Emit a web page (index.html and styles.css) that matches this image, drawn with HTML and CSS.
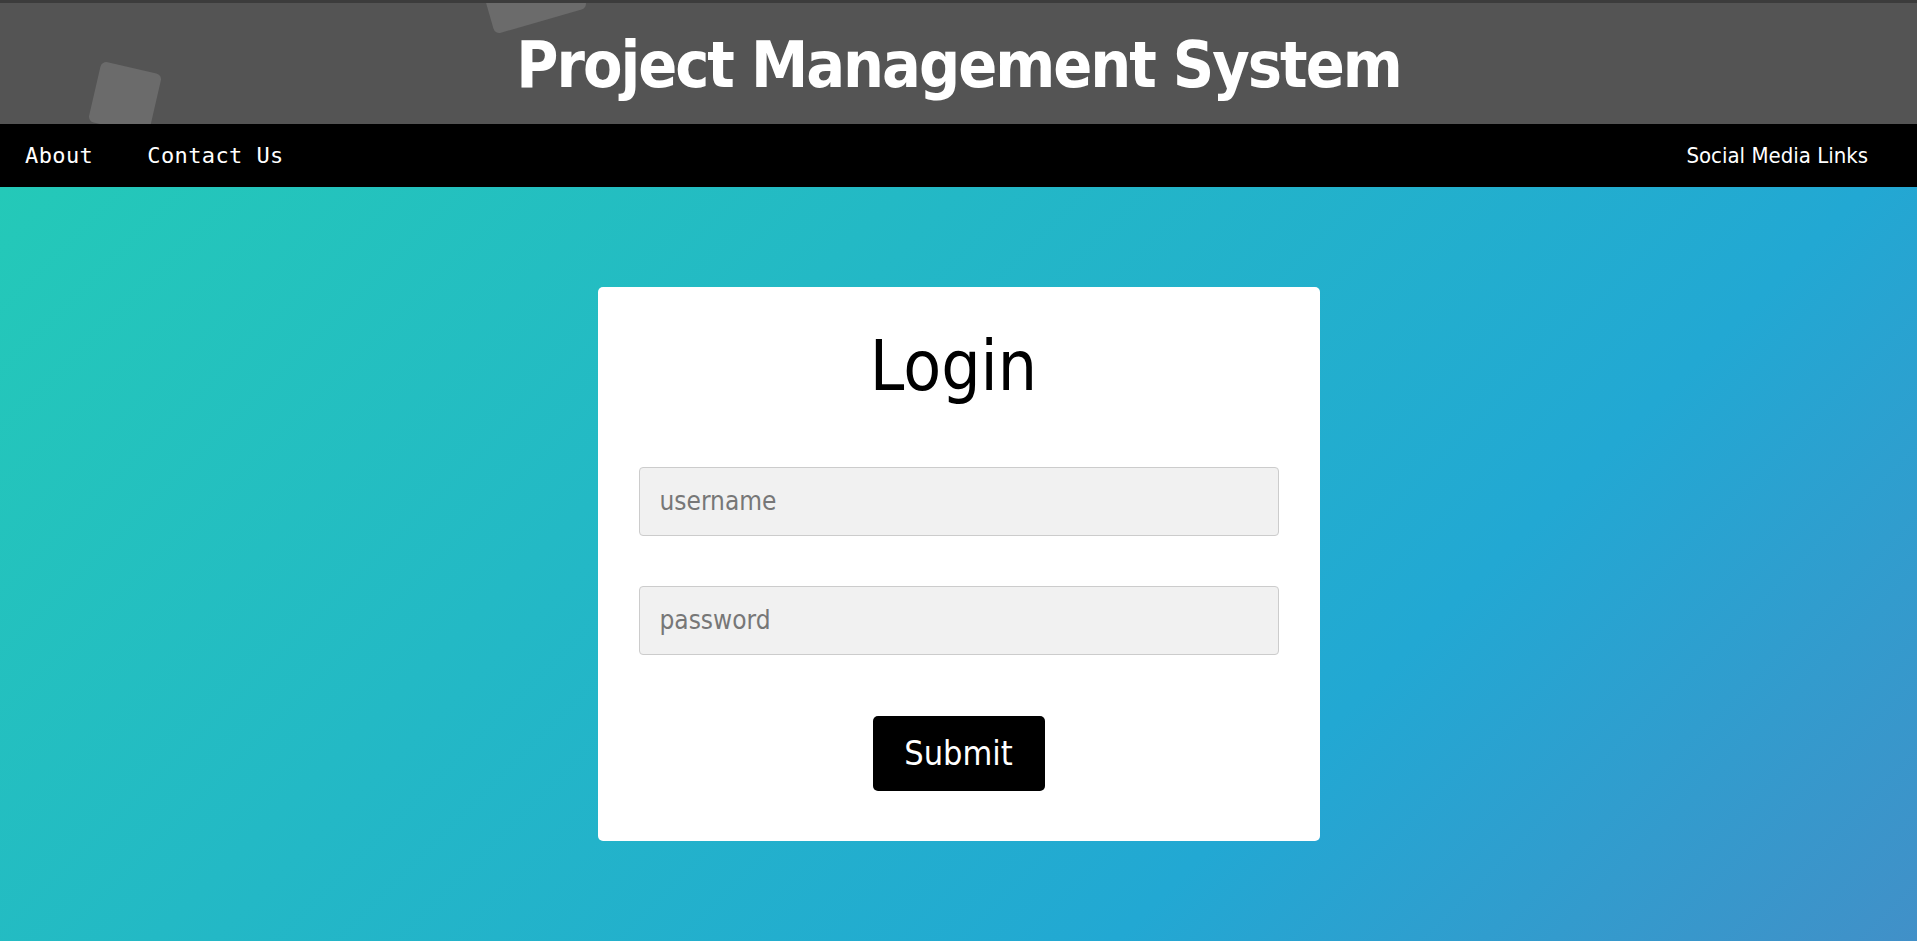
FILE: index.html
```html
<!DOCTYPE html>
<html lang="en">
<head>
<meta charset="utf-8">
<title>Project Management System</title>
<link rel="stylesheet" href="styles.css">
</head>
<body>
<header class="banner">
  <span class="shape shape-a"></span>
  <span class="shape shape-b"></span>
  <h1 class="banner-title">Project Management System</h1>
</header>
<nav class="topnav">
  <div class="topnav-left">
    <a class="topnav-link" href="#">About</a>
    <a class="topnav-link" href="#">Contact Us</a>
  </div>
  <a class="topnav-social" href="#">Social Media Links</a>
</nav>
<main class="stage">
  <form class="login-card">
    <h2 class="login-title">Login</h2>
    <input class="login-input" type="text" placeholder="username">
    <input class="login-input login-input-pass" type="password" placeholder="password">
    <button class="login-submit" type="button">Submit</button>
  </form>
</main>
</body>
</html>
```
FILE: styles.css
```css
* { box-sizing: border-box; }
html, body { margin: 0; padding: 0; height: 100%; }
body {
  font-family: "DejaVu Sans Condensed", "DejaVu Sans", sans-serif;
  font-stretch: condensed;
  display: flex;
  flex-direction: column;
  min-height: 941px;
}
.banner {
  position: relative;
  overflow: hidden;
  height: 124px;
  background: #545454;
  border-top: 3px solid #3c3c3c;
  display: flex;
  align-items: center;
  justify-content: center;
}
.shape {
  position: absolute;
  background: #6b6b6b;
  border-radius: 6px;
}
.shape-a {
  left: 94px;
  top: 64px;
  width: 62px;
  height: 62px;
  transform: rotate(13deg);
}
.shape-b {
  left: 480px;
  top: -76px;
  width: 96px;
  height: 96px;
  transform: rotate(-16deg);
}
.banner-title {
  position: relative;
  margin: 2px 0 0 0;
  color: #fff;
  font-weight: bold;
  font-size: 64px;
  letter-spacing: -2px;
  line-height: 1;
}
.topnav {
  height: 63px;
  background: #000;
  display: flex;
  align-items: center;
  justify-content: space-between;
  padding: 0 49px 0 25px;
}
.topnav-left { display: flex; gap: 54px; }
.topnav-link {
  color: #fff;
  text-decoration: none;
  font-family: "DejaVu Sans Mono", monospace;
  font-stretch: normal;
  font-size: 22px;
  letter-spacing: 0.4px;
}
.topnav-social {
  color: #fff;
  text-decoration: none;
  font-size: 22px;
}
.stage {
  flex: 1;
  display: flex;
  align-items: center;
  justify-content: center;
  background: linear-gradient(135deg, #24c9b8 0%, #22a8d3 70%, #4190c8 100%);
}
.login-card {
  width: 722px;
  height: 554px;
  background: #fff;
  border-radius: 5px;
  padding: 38px 41px 50px;
  display: flex;
  flex-direction: column;
  align-items: center;
}
.login-title {
  margin: 0 0 59px -10px;
  font-size: 69px;
  font-weight: normal;
  line-height: 1.2;
  color: #000;
}
.login-input {
  width: 100%;
  height: 70px;
  background: #f1f1f1;
  border: 1px solid #cccccc;
  border-radius: 4px;
  padding: 0 20px;
  font-family: inherit;
  font-stretch: condensed;
  font-size: 26px;
  color: #333;
  outline: none;
}
.login-input::placeholder { color: #777; }
.login-input-pass { margin-top: 50px; }
.login-submit {
  margin-top: 61px;
  width: 172px;
  height: 76px;
  background: #000;
  color: #fff;
  border: none;
  border-radius: 5px;
  font-family: inherit;
  font-stretch: condensed;
  font-size: 34px;
  cursor: pointer;
}
```
